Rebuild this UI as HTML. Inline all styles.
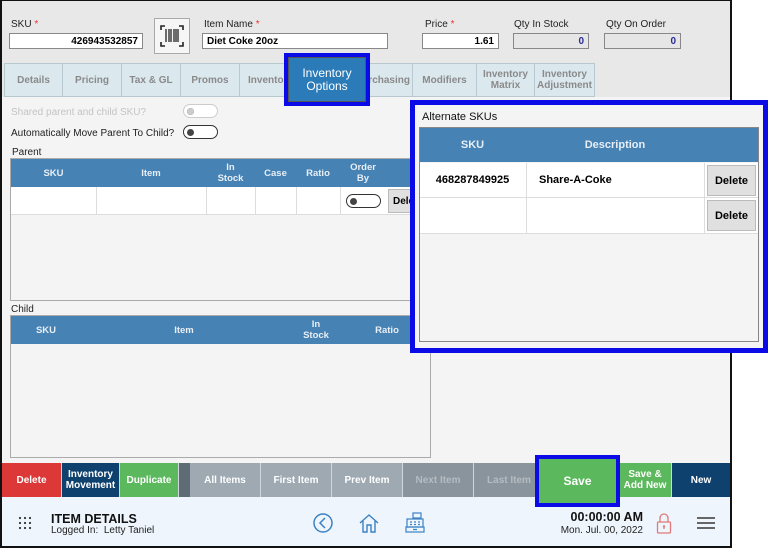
<!DOCTYPE html>
<html><head><style>
*{box-sizing:border-box;margin:0;padding:0}
body{width:768px;height:549px;background:#fff;font-family:"Liberation Sans",Arial,sans-serif;position:relative;overflow:hidden}
.a{position:absolute}
.win{left:0;top:0;width:732px;height:548px;border:2px solid #111;border-top-width:1px;background:#f4f4f4}
.lbl{font-size:10px;color:#222}
.req{color:#e33}
.inp{background:#fff;border:1px solid #888;height:16px;font-size:10px;font-weight:bold;text-align:right;padding:1px 4px;line-height:13px}
.ro{background:#e6e6e6;color:#2a2a9a}
.tab{top:63px;height:34px;background:#dbe8ee;border:1px solid #b8c8d0;color:#8a8a8a;font-size:10px;font-weight:bold;display:flex;align-items:center;justify-content:center;text-align:center;line-height:11px}
.th{background:#4682b4;color:#e8eef5;font-size:9.5px;font-weight:bold;display:flex;align-items:center;justify-content:center;text-align:center;line-height:11px}
.btn{top:463px;height:34px;color:#fff;font-size:10px;font-weight:bold;display:flex;align-items:center;justify-content:center;text-align:center;line-height:11px;border-right:1px solid #cfd6dc}
.tg{width:35px;height:14px;border:1.5px solid #333;border-radius:8px;background:#fff}
.tg:after{content:"";position:absolute;left:3px;top:2.5px;width:7px;height:7px;border-radius:50%;background:#444}
</style></head><body>
<div class="a win"></div>
<div class="a" style="left:2px;top:1px;width:728px;height:96px;background:#e8e8e8"></div>
<div class="a lbl" style="left:11px;top:19px">SKU <span class="req">*</span></div>
<div class="a inp" style="left:9px;top:33px;width:134px">426943532857</div>
<div class="a" style="left:154px;top:18px;width:36px;height:36px;border:1px solid #aaa;background:#f6f6f6"></div>
<svg class="a" style="left:160px;top:25px" width="24" height="22" viewBox="0 0 24 22"><path d="M1 5V1h4M19 1h4v4M23 17v4h-4M5 21H1v-4" fill="none" stroke="#222" stroke-width="1.6"/><path d="M6 4v13M9 4v13M11 4v13M14 4v13M16 4v13M18 4v13" stroke="#222" stroke-width="1.3"/></svg>
<div class="a lbl" style="left:204px;top:19px">Item Name <span class="req">*</span></div>
<div class="a inp" style="left:202px;top:33px;width:186px;text-align:left">Diet Coke 20oz</div>
<div class="a lbl" style="left:425px;top:19px">Price <span class="req">*</span></div>
<div class="a inp" style="left:422px;top:33px;width:77px">1.61</div>
<div class="a lbl" style="left:514px;top:19px">Qty In Stock</div>
<div class="a inp ro" style="left:513px;top:33px;width:76px">0</div>
<div class="a lbl" style="left:606px;top:19px">Qty On Order</div>
<div class="a inp ro" style="left:604px;top:33px;width:77px">0</div>
<div class="a tab" style="left:4px;width:59px">Details</div>
<div class="a tab" style="left:62px;width:60px">Pricing</div>
<div class="a tab" style="left:121px;width:60px">Tax &amp; GL</div>
<div class="a tab" style="left:180px;width:60px">Promos</div>
<div class="a tab" style="left:239px;width:50px;justify-content:flex-start;padding-left:8px">Inventor</div>
<div class="a tab" style="left:366px;width:47px;justify-content:flex-end;padding-right:2px">urchasing</div>
<div class="a tab" style="left:412px;width:65px">Modifiers</div>
<div class="a tab" style="left:476px;width:59px">Inventory<br>Matrix</div>
<div class="a tab" style="left:534px;width:61px">Inventory<br>Adjustment</div>
<div class="a" style="left:284px;top:53px;width:86px;height:53px;border:4px solid #0b0be8;background:#2b7bb9;color:#fff;font-size:12px;display:flex;align-items:center;justify-content:center;text-align:center;line-height:13px;box-shadow:inset 0 0 0 1px #555">Inventory<br>Options</div>
<div class="a" style="left:11px;top:107px;font-size:10px;color:#c4c4c4">Shared parent and child SKU?</div>
<div class="a tg" style="left:183px;top:104px;border-color:#ccc"></div><div class="a" style="left:187px;top:108px;width:7px;height:7px;border-radius:50%;background:#ccc"></div>
<div class="a lbl" style="left:11px;top:128px">Automatically Move Parent To Child?</div>
<div class="a tg" style="left:183px;top:125px"></div>
<div class="a lbl" style="left:12px;top:147px">Parent</div>
<div class="a" style="left:10px;top:158px;width:410px;height:143px;border:1px solid #aaa;background:#f4f4f4"></div>
<div class="a th" style="left:11px;top:159px;width:410px;height:28px"></div>
<div class="a th" style="left:11px;top:159px;width:85px;height:28px">SKU</div>
<div class="a th" style="left:96px;top:159px;width:110px;height:28px">Item</div>
<div class="a th" style="left:206px;top:159px;width:49px;height:28px">In<br>Stock</div>
<div class="a th" style="left:255px;top:159px;width:41px;height:28px">Case</div>
<div class="a th" style="left:296px;top:159px;width:44px;height:28px">Ratio</div>
<div class="a th" style="left:340px;top:159px;width:46px;height:28px">Order<br>By</div>
<div class="a" style="left:11px;top:187px;width:410px;height:28px;background:#fff;border-bottom:1px solid #ddd"></div>
<div class="a" style="left:96px;top:187px;width:1px;height:28px;background:#ddd"></div>
<div class="a" style="left:206px;top:187px;width:1px;height:28px;background:#ddd"></div>
<div class="a" style="left:255px;top:187px;width:1px;height:28px;background:#ddd"></div>
<div class="a" style="left:296px;top:187px;width:1px;height:28px;background:#ddd"></div>
<div class="a" style="left:340px;top:187px;width:1px;height:28px;background:#ddd"></div>
<div class="a tg" style="left:346px;top:194px"></div>
<div class="a" style="left:388px;top:189px;width:30px;height:24px;background:#e0e0e0;border:1px solid #bbb;font-size:10px;font-weight:bold;padding:6px 4px;overflow:hidden">Dele</div>
<div class="a lbl" style="left:11px;top:304px">Child</div>
<div class="a" style="left:10px;top:315px;width:421px;height:143px;border:1px solid #aaa;background:#f4f4f4"></div>
<div class="a th" style="left:11px;top:316px;width:419px;height:28px"></div>
<div class="a th" style="left:11px;top:316px;width:70px;height:28px">SKU</div>
<div class="a th" style="left:100px;top:316px;width:168px;height:28px">Item</div>
<div class="a th" style="left:292px;top:316px;width:48px;height:28px">In<br>Stock</div>
<div class="a th" style="left:360px;top:316px;width:54px;height:28px">Ratio</div>
<!-- Alternate SKUs -->
<div class="a" style="left:410px;top:100px;width:358px;height:253px;border:5px solid #0b0be8;background:#f4f4f4"></div>
<div class="a" style="left:422px;top:111px;font-size:11px;color:#111">Alternate SKUs</div>
<div class="a" style="left:419px;top:127px;width:340px;height:215px;border:1px solid #888;background:#f4f4f4"></div>
<div class="a th" style="left:420px;top:128px;width:338px;height:34px"></div>
<div class="a th" style="left:420px;top:128px;width:105px;height:34px;font-size:11px">SKU</div>
<div class="a th" style="left:526px;top:128px;width:178px;height:34px;font-size:11px">Description</div>
<div class="a" style="left:420px;top:163px;width:338px;height:70px;background:#fff"></div>
<div class="a" style="left:420px;top:197px;width:338px;height:1px;background:#ddd"></div>
<div class="a" style="left:420px;top:233px;width:338px;height:1px;background:#ddd"></div>
<div class="a" style="left:526px;top:163px;width:1px;height:70px;background:#ddd"></div>
<div class="a" style="left:704px;top:163px;width:1px;height:70px;background:#ddd"></div>
<div class="a" style="left:420px;top:174px;width:105px;text-align:center;font-size:11px;font-weight:bold">468287849925</div>
<div class="a" style="left:539px;top:174px;font-size:11px;font-weight:bold">Share-A-Coke</div>
<div class="a" style="left:707px;top:165px;width:49px;height:31px;background:#e0e0e0;border:1px solid #bbb;font-size:11px;font-weight:bold;display:flex;align-items:center;justify-content:center">Delete</div>
<div class="a" style="left:707px;top:200px;width:49px;height:31px;background:#e0e0e0;border:1px solid #bbb;font-size:11px;font-weight:bold;display:flex;align-items:center;justify-content:center">Delete</div>
<!-- bottom bar -->
<div class="a" style="left:2px;top:463px;width:728px;height:34px;background:#5f6b75"></div>
<div class="a btn" style="left:2px;width:60px;background:#dc3838">Delete</div>
<div class="a btn" style="left:62px;width:58px;background:#0e416e">Inventory<br>Movement</div>
<div class="a btn" style="left:120px;width:59px;background:#5cb85c">Duplicate</div>
<div class="a btn" style="left:190px;width:71px;background:#9ea9b2">All Items</div>
<div class="a btn" style="left:261px;width:71px;background:#9ea9b2">First Item</div>
<div class="a btn" style="left:332px;width:71px;background:#9ea9b2">Prev Item</div>
<div class="a btn" style="left:403px;width:71px;background:#8a949c;color:#b4bcc2">Next Item</div>
<div class="a btn" style="left:474px;width:71px;background:#8a949c;color:#b4bcc2">Last Item</div>
<div class="a btn" style="left:619px;width:53px;background:#5cb85c">Save &amp;<br>Add New</div>
<div class="a btn" style="left:672px;width:58px;background:#0e416e;border:none">New</div>
<div class="a" style="left:535px;top:455px;width:85px;height:52px;border:4px solid #0b0be8;background:#5cb85c;color:#fff;font-size:12px;font-weight:bold;display:flex;align-items:center;justify-content:center">Save</div>
<!-- footer -->
<div class="a" style="left:2px;top:507px;width:728px;height:39px;background:#eef5fc"></div>
<div class="a" style="left:2px;top:497px;width:533px;height:10px;background:#eef5fc"></div>
<div class="a" style="left:620px;top:497px;width:110px;height:10px;background:#eef5fc"></div>
<svg class="a" style="left:18px;top:516px" width="14" height="14"><g fill="#333"><circle cx="2" cy="2" r="1.1"/><circle cx="7" cy="2" r="1.1"/><circle cx="12" cy="2" r="1.1"/><circle cx="2" cy="7" r="1.1"/><circle cx="7" cy="7" r="1.1"/><circle cx="12" cy="7" r="1.1"/><circle cx="2" cy="12" r="1.1"/><circle cx="7" cy="12" r="1.1"/><circle cx="12" cy="12" r="1.1"/></g></svg>
<div class="a" style="left:51px;top:512px;font-size:12.5px;font-weight:bold;color:#111">ITEM DETAILS</div>
<div class="a" style="left:51px;top:525px;font-size:10px;color:#222">Logged In:&nbsp; Letty Taniel</div>
<svg class="a" style="left:312px;top:512px" width="22" height="22"><circle cx="11" cy="11" r="9" fill="none" stroke="#3b82c4" stroke-width="1.5"/><path d="M13 6l-5 5 5 5" fill="none" stroke="#3b82c4" stroke-width="1.5"/></svg>
<svg class="a" style="left:358px;top:512px" width="22" height="22"><path d="M2 11L11 3l9 8M5 9v11h4v-7h4v7h4V9" fill="none" stroke="#3b82c4" stroke-width="1.4"/></svg>
<svg class="a" style="left:405px;top:512px" width="20" height="22"><g fill="none" stroke="#3b82c4" stroke-width="1.2"><rect x="8" y="1" width="8" height="5"/><rect x="2" y="7" width="16" height="8"/><rect x="1" y="15" width="18" height="5"/><path d="M5 10h2M9 10h2M13 10h2M5 12.5h2M9 12.5h2M13 12.5h2M8 17.5h4"/></g></svg>
<div class="a" style="left:540px;top:510px;width:103px;text-align:right;font-size:12.5px;font-weight:bold;color:#111">00:00:00 AM</div>
<div class="a" style="left:540px;top:525px;width:103px;text-align:right;font-size:10px;color:#222">Mon. Jul. 00, 2022</div>
<svg class="a" style="left:656px;top:513px" width="16" height="21"><g fill="none" stroke="#e07a7a" stroke-width="1.3"><path d="M4 9V5a4 4 0 0 1 8 0v4"/><rect x="1.5" y="9" width="13" height="11" rx="1"/><path d="M8 13v3"/></g><circle cx="8" cy="13.5" r="1.2" fill="#e07a7a"/></svg>
<svg class="a" style="left:697px;top:516px" width="18" height="14"><path d="M0 2h18M0 7h18M0 12h18" stroke="#666" stroke-width="2"/></svg>
<div class="a" style="left:0;top:546px;width:732px;height:2px;background:#111"></div>
</body></html>
